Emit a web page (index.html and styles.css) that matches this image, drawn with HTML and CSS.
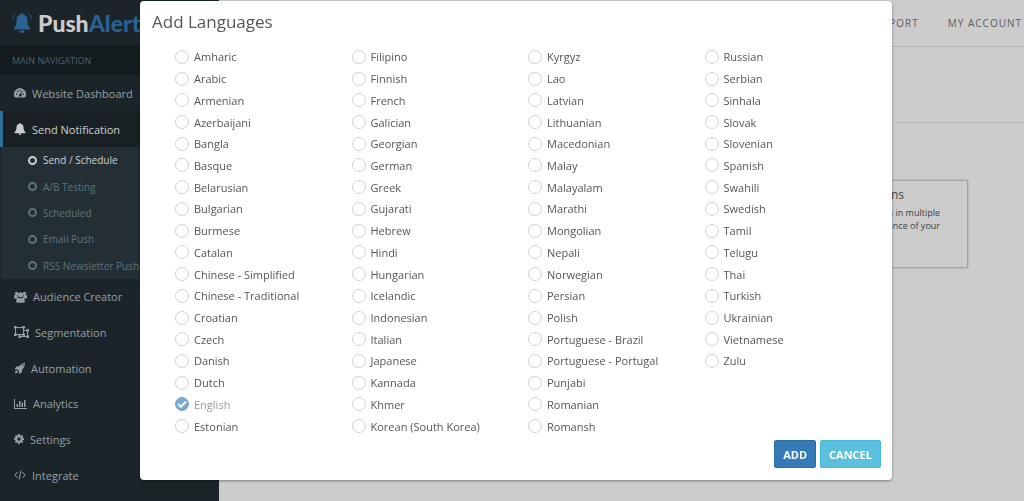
FILE: index.html
```html
<!DOCTYPE html>
<html lang="en">
<head>
	<meta charset="utf-8">
	<title>PushAlert - Add Languages</title>
	<link rel="stylesheet" href="styles.css">
</head>
<body>
	<div class="wrapper">
		<aside class="sidebar">
			<a class="brand" href="#">
				<svg width="20" height="22" viewBox="0 0 20 22">
					<path fill="currentColor" d="M10 1c.8 0 1.300.6 1.300 1.300 2.600.6 4.200 2.700 4.200 5.700 0 5 1.200 6.800 2.500 8.200v1.400H2v-1.400c1.300-1.400 2.500-3.200 2.500-8.200 0-3 1.600-5.100 4.200-5.700C8.700 1.600 9.200 1 10 1zM7.500 18.500h5a2.500 2.500 0 0 1-5 0z"/>
					<path fill="none" stroke="currentColor" d="M3.500 1.500Q1 3.500 .600 7M16.500 1.500Q19 3.500 19.400 7"/>
				</svg>
				<span class="brand-name">Push<span class="brand-accent">Alert</span></span>
			</a>
			<div class="nav-header">MAIN NAVIGATION</div>
			<nav>
				<a class="nav-link" href="#">
					<svg width="12" height="12" viewBox="0 0 12 12"><path fill="currentColor" fill-rule="evenodd" d="M1 10.500A6 6 0 1 1 11 10.500zM2 6.500v1.300h1.300V6.500zM3 3.800v1.300h1.300V3.800zM5.400 2.700V4h1.200V2.700zM8.700 6.500v1.300H10V6.500zM7.600 3.900L6.300 7A1.300 1.300 0 1 0 7.200 7.300L8.400 4.200z"/></svg>
					Website Dashboard
				</a>
				<a class="nav-link active" href="#">
					<svg width="12" height="12" viewBox="0 0 12 12"><path fill="currentColor" d="M6 0c.5 0 .8.300.8.800 1.700.3 2.700 1.600 2.700 3.300 0 3 .8 4.200 2 5.200v.9H.500v-.9c1.200-1 2-2.200 2-5.200 0-1.700 1-3 2.700-3.300C5.200.300 5.500 0 6 0zM4.600 10.600h2.800a1.400 1.400 0 0 1-2.800 0z"/></svg>
					Send Notification
				</a>
				<div class="submenu">
					<a class="current" href="#">Send / Schedule</a>
					<a href="#">A/B Testing</a>
					<a href="#">Scheduled</a>
					<a href="#">Email Push</a>
					<a href="#">RSS Newsletter Push</a>
				</div>
				<div class="nav-group">
					<a class="nav-link" href="#">
						<svg width="13" height="12" viewBox="0 0 13 12"><g fill="currentColor"><circle cx="2.600" cy="2.400" r="1.700"/><circle cx="10.400" cy="2.400" r="1.700"/><circle cx="6.500" cy="3.800" r="2.500"/><path d="M0 7V5.200Q0 4 1 4h2.400q0 1.800 1 2.600Q3 6.600 2.500 7.400H.6Q0 7.400 0 7zM13 7V5.200Q13 4 12 4H9.600q0 1.800-1 2.600 1.400 0 1.900.8h1.900q.6 0 .6-.4zM2.200 10.200q0-3.500 2.200-3.500 2.100 1.200 4.200 0 2.200 0 2.200 3.500 0 1.600-1.600 1.600H3.800q-1.600 0-1.600-1.600z"/></g></svg>
						Audience Creator
					</a>
					<a class="nav-link" href="#">
						<svg width="15" height="12" viewBox="0 0 15 12"><path fill="none" stroke="currentColor" d="M1.500 1.500h8v7h-8zM9.500 4.500h4v6h-8v-2"/><path fill="currentColor" d="M0 0h2.500v2.500H0zM8.500 0H11v2.500H8.500zM0 7.500h2.500V10H0zM8.500 7.500H11V10H8.500zM12.500 3H15v2.500h-2.500zM12.500 9.500H15V12h-2.500zM4.500 9.500H7V12H4.500z"/></svg>
						Segmentation
					</a>
					<a class="nav-link" href="#">
						<svg width="11" height="12" viewBox="0 0 11 12"><path fill="currentColor" fill-rule="evenodd" d="M11 .7q.1 4.300-2.700 6.800L8 10.300l-2.800 1.500-.5-.4.500-2L3.200 7.300l-2 .5-.5-.5L2.300 4.500l2.900-.2Q7.500 1 11 .7zM8.700 2.200a.8.800 0 1 0 .1 1.600.8.800 0 0 0-.1-1.600zM2.500 8.200l1.700 1.700Q3 11.500.8 11.300 1 9 2.500 8.200z"/></svg>
						Automation
					</a>
					<a class="nav-link" href="#">
						<svg width="13" height="12" viewBox="0 0 13 12"><path fill="currentColor" d="M0 1h1v9h12v1H0zM2.500 6H4v3H2.500zM5 3h1.500v6H5zM7.500 4.500H9V9H7.500zM10 2h1.500v7H10z"/></svg>
						Analytics
					</a>
					<a class="nav-link" href="#">
						<svg width="10" height="10" viewBox="128 128 1536 1536"><path fill="currentColor" d="M1152 896q0-106-75-181t-181-75-181 75-75 181 75 181 181 75 181-75 75-181zm512-109v222q0 12-8 23t-20 13l-185 28q-19 54-39 91 35 50 107 138 10 12 10 25t-9 23q-27 37-99 108t-94 71q-12 0-26-9l-138-108q-44 23-91 38-16 136-29 186-7 28-36 28h-222q-14 0-24.500-8.500t-11.500-21.500l-28-184q-49-16-90-37l-141 107q-10 9-25 9-14 0-25-11-126-114-165-168-7-10-7-23 0-12 8-23 15-21 51-66.500t54-70.500q-27-50-41-99l-183-27q-13-2-21-12.500t-8-23.500v-222q0-12 8-23t19-13l186-28q14-46 39-92-40-57-107-138-10-12-10-24 0-10 9-23 26-36 98.500-107.500t94.500-71.500q13 0 26 10l138 107q44-23 91-38 16-136 29-186 7-28 36-28h222q14 0 24.500 8.500t11.500 21.500l28 184q49 16 90 37l142-107q9-9 24-9 13 0 25 10 129 119 165 170 7 8 7 22 0 12-8 23-15 21-51 66.500t-54 70.500q26 50 41 98l183 28q13 2 21 12.500t8 23.500z"/></svg>
						Settings
					</a>
					<a class="nav-link" href="#">
						<svg width="12" height="12" viewBox="0 0 12 12"><path fill="none" stroke="currentColor" d="M3.500 3L.8 6l2.700 3M8.500 3l2.700 3-2.700 3M7 1.500l-2 9"/></svg>
						Integrate
					</a>
				</div>
			</nav>
		</aside>
		<main class="content">
			<header class="topbar">
				<a href="#">SUPPORT</a>
				<a href="#">MY ACCOUNT</a>
			</header>
			<div class="page-title"></div>
			<section class="card">
				<h4>Translations</h4>
				<p>Send your notification in multiple<br>languages to the audience of your</p>
			</section>
		</main>
	</div>

	<div class="overlay">
		<form class="modal" role="dialog" aria-labelledby="modal-title">
			<h2 id="modal-title">Add Languages</h2>
			<div class="language-list">
				<label><input type="checkbox">Amharic</label>
				<label><input type="checkbox">Arabic</label>
				<label><input type="checkbox">Armenian</label>
				<label><input type="checkbox">Azerbaijani</label>
				<label><input type="checkbox">Bangla</label>
				<label><input type="checkbox">Basque</label>
				<label><input type="checkbox">Belarusian</label>
				<label><input type="checkbox">Bulgarian</label>
				<label><input type="checkbox">Burmese</label>
				<label><input type="checkbox">Catalan</label>
				<label><input type="checkbox">Chinese - Simplified</label>
				<label><input type="checkbox">Chinese - Traditional</label>
				<label><input type="checkbox">Croatian</label>
				<label><input type="checkbox">Czech</label>
				<label><input type="checkbox">Danish</label>
				<label><input type="checkbox">Dutch</label>
				<label class="disabled"><input type="checkbox" checked disabled>English</label>
				<label><input type="checkbox">Estonian</label>
				<label><input type="checkbox">Filipino</label>
				<label><input type="checkbox">Finnish</label>
				<label><input type="checkbox">French</label>
				<label><input type="checkbox">Galician</label>
				<label><input type="checkbox">Georgian</label>
				<label><input type="checkbox">German</label>
				<label><input type="checkbox">Greek</label>
				<label><input type="checkbox">Gujarati</label>
				<label><input type="checkbox">Hebrew</label>
				<label><input type="checkbox">Hindi</label>
				<label><input type="checkbox">Hungarian</label>
				<label><input type="checkbox">Icelandic</label>
				<label><input type="checkbox">Indonesian</label>
				<label><input type="checkbox">Italian</label>
				<label><input type="checkbox">Japanese</label>
				<label><input type="checkbox">Kannada</label>
				<label><input type="checkbox">Khmer</label>
				<label><input type="checkbox">Korean (South Korea)</label>
				<label><input type="checkbox">Kyrgyz</label>
				<label><input type="checkbox">Lao</label>
				<label><input type="checkbox">Latvian</label>
				<label><input type="checkbox">Lithuanian</label>
				<label><input type="checkbox">Macedonian</label>
				<label><input type="checkbox">Malay</label>
				<label><input type="checkbox">Malayalam</label>
				<label><input type="checkbox">Marathi</label>
				<label><input type="checkbox">Mongolian</label>
				<label><input type="checkbox">Nepali</label>
				<label><input type="checkbox">Norwegian</label>
				<label><input type="checkbox">Persian</label>
				<label><input type="checkbox">Polish</label>
				<label><input type="checkbox">Portuguese - Brazil</label>
				<label><input type="checkbox">Portuguese - Portugal</label>
				<label><input type="checkbox">Punjabi</label>
				<label><input type="checkbox">Romanian</label>
				<label><input type="checkbox">Romansh</label>
				<label><input type="checkbox">Russian</label>
				<label><input type="checkbox">Serbian</label>
				<label><input type="checkbox">Sinhala</label>
				<label><input type="checkbox">Slovak</label>
				<label><input type="checkbox">Slovenian</label>
				<label><input type="checkbox">Spanish</label>
				<label><input type="checkbox">Swahili</label>
				<label><input type="checkbox">Swedish</label>
				<label><input type="checkbox">Tamil</label>
				<label><input type="checkbox">Telugu</label>
				<label><input type="checkbox">Thai</label>
				<label><input type="checkbox">Turkish</label>
				<label><input type="checkbox">Ukrainian</label>
				<label><input type="checkbox">Vietnamese</label>
				<label><input type="checkbox">Zulu</label>
			</div>
			<div class="modal-footer">
				<button type="button" class="btn btn-primary">ADD</button>
				<button type="button" class="btn btn-info">CANCEL</button>
			</div>
		</form>
	</div>
</body>
</html>
```
FILE: styles.css
```css
*,
*::before {
  box-sizing: border-box;
}

body {
  margin: 0;
  overflow: hidden;
  font-family: "Open Sans", sans-serif;
  font-size: 11px;
  color: #555;
  background-color: #fff;
}

a {
  color: inherit;
  text-decoration: none;
}

.wrapper {
  display: flex;
  min-height: 100vh;
}

/* sidebar */
.sidebar {
  flex: 0 0 219px;
  background-color: #222d32;
  color: #b8c7ce;
}

.brand {
  display: flex;
  align-items: center;
  gap: 6px;
  height: 46px;
  padding-left: 12px;
  color: #337ab7;
}

.brand-name {
  font-family: Lato, sans-serif;
  font-size: 23px;
  font-weight: 900;
  color: #fff;
}

.brand-accent {
  color: #337ab7;
}

.nav-header {
  height: 29px;
  padding-left: 12px;
  line-height: 29px;
  font-size: 9px;
  color: #5c7986;
  background-color: #1a2226;
}

.nav-link {
  display: flex;
  align-items: center;
  gap: 6px;
  height: 36px;
  padding-left: 11px;
  border-left: 3px solid transparent;
  font-size: 12px;
}

.nav-link.active {
  color: #fff;
  background-color: #1e282c;
  border-left-color: #3c8dbc;
}

.submenu {
  display: grid;
  grid-auto-rows: 1fr;
  height: 132px;
  margin: 0 1px;
  background-color: #2c3b41;
  font-size: 10px;
  color: #75909b;
}

.submenu a {
  display: flex;
  align-items: center;
  gap: 6px;
  padding-left: 27px;
}

.submenu a::before {
  content: "";
  width: 9px;
  height: 9px;
  border: 2px solid currentColor;
  border-radius: 50%;
}

.submenu .current {
  color: #fff;
}

.nav-group {
  display: grid;
  grid-auto-rows: 1fr;
  height: 214px;
}

.nav-link,
.nav-group .nav-link {
  font-size: 11px;
}

.nav-group .nav-link {
  height: auto;
}

/* page behind the dialog */
.content {
  flex: 1;
}

.topbar {
  display: flex;
  justify-content: flex-end;
  align-items: center;
  gap: 29px;
  height: 47px;
  padding-right: 2px;
  border-bottom: 1px solid #ddd;
  font-size: 10px;
  letter-spacing: 1px;
  color: #777;
}

.page-title {
  height: 76px;
  border-bottom: 1px solid #eee;
}

.card {
  width: 240px;
  height: 88px;
  margin: 57px 56px 0 auto;
  padding: 5px 27px;
  border: 1px solid #ccc;
  box-shadow: 0 0 2px #ccc;
  text-align: right;
}

.card h4 {
  margin: 0 36px 2px 0;
  font-size: 12px;
  font-weight: normal;
  line-height: 18px;
}

.card p {
  margin: 0;
  font-size: 9px;
  line-height: 13px;
  white-space: nowrap;
}

/* dialog */
.overlay {
  position: fixed;
  inset: 0;
  padding: 1px 132px 0 140px;
  background-color: rgba(0, 0, 0, 0.2);
}

.modal {
  padding: 10px 11px 12px 12px;
  background-color: #fff;
  border-radius: 4px;
  box-shadow: 0 1px 3px rgba(0, 0, 0, 0.4);
}

.modal h2 {
  margin: 0;
  font-size: 17px;
  font-weight: normal;
  line-height: 22px;
}

.language-list {
  display: grid;
  grid-template-rows: repeat(18, 1fr);
  grid-auto-columns: 1fr;
  grid-auto-flow: column;
  height: 391px;
  margin: 13px 0 3px 23px;
}

.language-list label {
  display: flex;
  align-items: center;
  gap: 5px;
}

.language-list .disabled {
  color: #999;
}

.language-list input {
  appearance: none;
  width: 14px;
  height: 14px;
  margin: 0;
  border: 1px solid #d2d2d2;
  border-radius: 50%;
}

.language-list input:checked {
  display: grid;
  place-items: center;
  background-color: #337ab7;
  border-color: #337ab7;
}

.language-list input:checked::before {
  content: "";
  width: 8px;
  height: 5px;
  margin-bottom: 2px;
  border: solid #fff;
  border-width: 0 0 2px 2px;
  transform: rotate(-45deg);
}

.language-list input:disabled {
  opacity: 0.65;
}

.modal-footer {
  display: flex;
  justify-content: flex-end;
  gap: 4px;
}

.btn {
  height: 28px;
  padding: 0 8px;
  border: 1px solid transparent;
  border-radius: 2px;
  font-family: inherit;
  font-size: 11px;
  font-weight: bold;
  color: #fff;
  cursor: pointer;
}

.btn-primary {
  background-color: #337ab7;
  border-color: #2e6da4;
}

.btn-info {
  background-color: #5bc0de;
  border-color: #46b8da;
}
```
